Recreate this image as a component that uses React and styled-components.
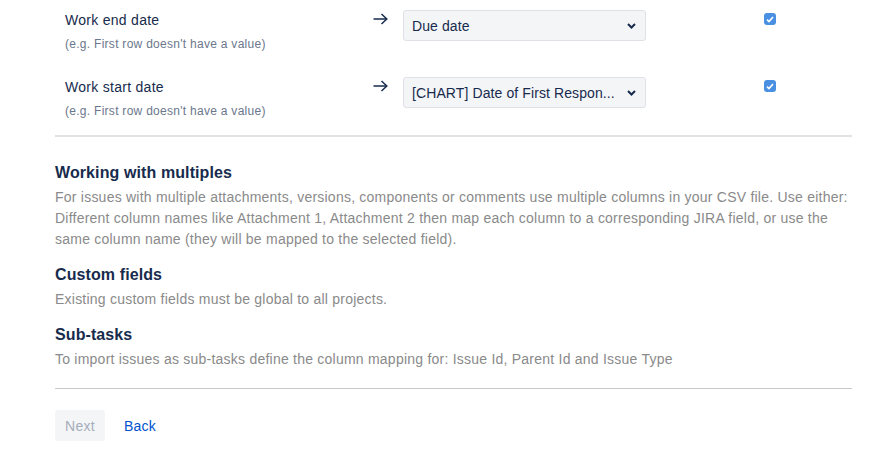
import React from 'react';
import styled, { createGlobalStyle } from 'styled-components';

const GlobalStyle = createGlobalStyle`
  body {
    margin: 0;
    background: #fff;
    font-family: 'Liberation Sans', Arial, sans-serif;
    color: #172b4d;
    letter-spacing: 0.28px;
  }
`;

const mappings = [
  { field: 'Work end date', target: 'Due date', checked: true },
  { field: 'Work start date', target: '[CHART] Date of First Respon...', checked: true },
];

const notes = [
  {
    title: 'Working with multiples',
    text: 'For issues with multiple attachments, versions, components or comments use multiple columns in your CSV file. Use either: Different column names like Attachment 1, Attachment 2 then map each column to a corresponding JIRA field, or use the same column name (they will be mapped to the selected field).',
  },
  { title: 'Custom fields', text: 'Existing custom fields must be global to all projects.' },
  {
    title: 'Sub-tasks',
    text: 'To import issues as sub-tasks define the column mapping for: Issue Id, Parent Id and Issue Type',
  },
];

const ArrowIcon = () => (
  <svg width='15' height='12' viewBox='0 0 15 12' fill='none' stroke='#172b4d' strokeWidth='1.5'>
    <path d='M0.5 6 H13.5' />
    <path d='M8.5 1 L13.8 6 L8.5 11' />
  </svg>
);

const Chevron = () => (
  <svg width='9' height='6' viewBox='0 0 9 6' fill='none' stroke='#172b4d' strokeWidth='2'>
    <path d='M1 1 L4.5 4.5 L8 1' />
  </svg>
);

const App = () => {
  return (
    <Page>
      <GlobalStyle />
      <Mappings>
        {mappings.map((m) => (
          <Row key={m.field}>
            <FieldInfo>
              <FieldName>{m.field}</FieldName>
              <Hint>(e.g. First row doesn't have a value)</Hint>
            </FieldInfo>
            <Arrow>
              <ArrowIcon />
            </Arrow>
            <Select>
              <SelectText>{m.target}</SelectText>
              <Chevron />
            </Select>
            <Check checked={m.checked}>
              <svg width='8' height='7' viewBox='0 0 8 7' fill='none' stroke='#fff' strokeWidth='1.6'>
                <path d='M1 3.6 L3 5.6 L7 1' />
              </svg>
            </Check>
          </Row>
        ))}
      </Mappings>
      <Divider />
      <Notes>
        {notes.map((n) => (
          <Note key={n.title}>
            <NoteTitle>{n.title}</NoteTitle>
            <NoteText>{n.text}</NoteText>
          </Note>
        ))}
      </Notes>
      <Divider $thin />
      <Actions>
        <Button disabled>Next</Button>
        <LinkButton>Back</LinkButton>
      </Actions>
    </Page>
  );
};

export default App;

const Page = styled.div`
  width: 797px;
  padding-left: 55px;
`;

const Mappings = styled.div`
  display: flex;
  flex-direction: column;
  gap: 25px;
  padding: 10px 0 16px;
`;

const Row = styled.div`
  display: grid;
  grid-template-columns: 308px 30px 243px 1fr;
  align-items: start;
  padding: 0 10px;
`;

const FieldInfo = styled.div`
  display: flex;
  flex-direction: column;
`;

const FieldName = styled.span`
  font-size: 14px;
  line-height: 20px;
  color: #172b4d;
`;

const Hint = styled.span`
  margin-top: 6px;
  font-size: 12px;
  line-height: 16px;
  color: #6b778c;
`;

const Arrow = styled.div`
  display: flex;
  padding-top: 3px;
`;

const Select = styled.div`
  box-sizing: border-box;
  display: flex;
  align-items: center;
  justify-content: space-between;
  height: 31px;
  padding: 0 9px 0 8px;
  background: #f4f5f7;
  border: 1px solid #dfe1e6;
  border-radius: 3px;
`;

const SelectText = styled.span`
  font-size: 14px;
  letter-spacing: 0.1px;
  color: #172b4d;
  white-space: nowrap;
  overflow: hidden;
`;

const Check = styled.span`
  display: flex;
  align-items: center;
  justify-content: center;
  width: 12px;
  height: 12px;
  margin: 3px 0 0 118px;
  border-radius: 3px;
  background: ${({ checked }) => (checked ? '#4a90e2' : '#fff')};
  border: ${({ checked }) => (checked ? 'none' : '1px solid #999')};
`;

const Divider = styled.hr`
  margin: 0;
  border: none;
  height: ${({ $thin }) => ($thin ? '1px' : '2px')};
  background: ${({ $thin }) => ($thin ? '#c9c9c9' : '#e1e1e6')};
`;

const Notes = styled.div`
  display: flex;
  flex-direction: column;
  gap: 15px;
  padding: 26px 0 18px;
`;

const Note = styled.div`
  display: flex;
  flex-direction: column;
  gap: 4px;
`;

const NoteTitle = styled.h4`
  margin: 0;
  font-size: 16px;
  line-height: 20px;
  font-weight: 600;
  letter-spacing: 0.1px;
  color: #172b4d;
`;

const NoteText = styled.p`
  margin: 0;
  font-size: 14px;
  line-height: 21px;
  letter-spacing: 0.23px;
  color: #8a8a8a;
`;

const Actions = styled.div`
  display: flex;
  align-items: center;
  gap: 19px;
  padding-top: 21px;
`;

const Button = styled.button`
  height: 31px;
  padding: 0 10px;
  border: none;
  border-radius: 3px;
  background: #f4f5f7;
  color: #a5adba;
  font-family: inherit;
  font-size: 14px;
  letter-spacing: inherit;
  &:disabled {
    cursor: not-allowed;
  }
`;

const LinkButton = styled.button`
  padding: 0;
  border: none;
  background: none;
  color: #0052cc;
  font-family: inherit;
  font-size: 14px;
  letter-spacing: inherit;
  cursor: pointer;
`;
